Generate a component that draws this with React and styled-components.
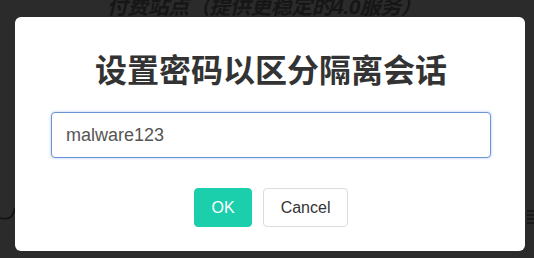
import React from "react";
import styled, { createGlobalStyle } from "styled-components";

const GlobalStyle = createGlobalStyle`
	html, body {
		margin: 0;
		padding: 0;
		background: #2b2b2b;
		font-family: "Liberation Sans", "Noto Sans CJK SC", sans-serif;
	}
`;

const Page = styled.div`
	width: 534px;
	height: 258px;
	overflow: hidden;
	position: relative;
`;

const Backdrop = styled.div`
	height: 17px;
	overflow: hidden;
	display: flex;
	justify-content: center;
	padding-right: 6px;
`;

const BackText = styled.span`
	font-size: 21px;
	line-height: 14px;
	font-weight: 700;
	font-style: italic;
	color: #161616;
	white-space: nowrap;
	letter-spacing: -0.5px;
`;

const Modal = styled.div`
	margin-left: 15px;
	width: 510px;
	height: 234px;
	box-sizing: border-box;
	background: #fff;
	border-radius: 6px;
	padding: 32px 34px 24px 36px;
	display: flex;
	flex-direction: column;
	align-items: center;
`;

const Title = styled.h2`
	margin: 0;
	font-size: 32px;
	line-height: 38px;
	font-weight: 700;
	color: #333;
	font-family: "Noto Sans CJK SC", sans-serif;
`;

const Input = styled.input`
	margin-top: 25px;
	width: 440px;
	height: 47px;
	box-sizing: border-box;
	border: 1px solid #6b95d6;
	border-radius: 4px;
	box-shadow: 0 0 3px rgba(80, 130, 210, 0.45);
	padding: 0 14px;
	font-family: "Liberation Sans", sans-serif;
	font-size: 18px;
	color: #555;
	outline: none;
	caret-color: #333;
`;

const Buttons = styled.div`
	margin-top: 30px;
	display: flex;
	gap: 11px;
`;

const Button = styled.button`
	height: 39px;
	padding: 0 16.5px;
	border-radius: 4px;
	font-family: "Liberation Sans", sans-serif;
	font-size: 16px;
	cursor: pointer;
	border: 1px solid ${(p) => (p.$primary ? "#1ccfac" : "#dcdcdc")};
	background: ${(p) => (p.$primary ? "#1ccfac" : "#fff")};
	color: ${(p) => (p.$primary ? "#fff" : "#333")};
`;

const Scribble = styled.svg`
	position: absolute;
	left: 0;
	top: 205px;
`;

const Lines = styled.svg`
	position: absolute;
	right: 0;
	top: 208px;
`;

export default function App() {
	return (
		<Page>
			<GlobalStyle />
			<Backdrop>
				<BackText>付费站点（提供更稳定的4.0服务）</BackText>
			</Backdrop>
			<Modal>
				<Title>设置密码以区分隔离会话</Title>
				<Input defaultValue="malware123" />
				<Buttons>
					<Button $primary>OK</Button>
					<Button>Cancel</Button>
				</Buttons>
			</Modal>
			<Scribble width="15" height="20" viewBox="0 0 15 20">
				<path d="M0 13 Q6 15 11 12 Q14 8 15 3" stroke="#111" strokeWidth="1.5" fill="none" />
			</Scribble>
			<Lines width="9" height="20" viewBox="0 0 9 20">
				<path d="M2 3 H9 M2 7 H9 M2 11 H9 M2 15 H9" stroke="#161616" strokeWidth="1.5" />
			</Lines>
		</Page>
	);
}
